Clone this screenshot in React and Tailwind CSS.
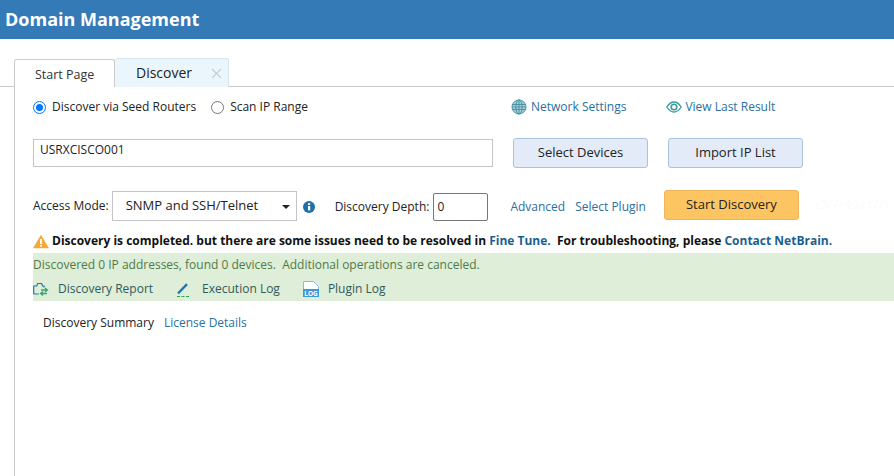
import React from "react";

const Radio = ({ on }) => (
  <span className={`w-[13px] h-[13px] rounded-full flex items-center justify-center border bg-white ${on ? "border-[#0075ff]" : "border-[#767676]"}`}>
    {on && <span className="w-[7px] h-[7px] rounded-full bg-[#0075ff]" />}
  </span>
);

const Btn = ({ children, cls }) => (
  <div className={`h-[30px] w-[135px] rounded-[3px] border flex items-center justify-center text-[13px] text-[#222] ${cls}`}>{children}</div>
);

export default function App() {
  return (
    <div className="w-[894px] h-[476px] overflow-hidden bg-white text-[12px] text-[#222] flex flex-col" style={{ fontFamily: '"Open Sans", sans-serif' }}>
      <div className="h-[39px] bg-[#337ab7] flex items-center pl-[5px] text-white font-bold text-[18px] shrink-0">Domain Management</div>

      <div className="pl-[14px] pt-[19px] flex items-end h-[48px] shrink-0 border-b border-[#c8c8c8] -mb-px relative">
        <div className="w-[101px] h-[28px] border border-[#ccc] border-b-0 rounded-t-[3px] bg-white flex items-center pl-[20px] pt-[3px] -mb-px font-normal text-[12.5px] text-[#333]">Start Page</div>
        <div className="w-[114px] h-[29px] border border-[#d6e4ec] border-l-0 border-b-0 rounded-t-[3px] bg-[#ebf6fc] flex items-center -mb-px relative">
          <span className="ml-[21px] text-[14px] text-[#222] -mt-[2px]">Discover</span>
          <svg className="absolute left-[96px] top-[9px]" width="11" height="11" viewBox="0 0 11 11" fill="none" stroke="#c5ccd0" strokeWidth="1.1"><path d="M1 1l9 9M10 1l-9 9" /></svg>
        </div>
      </div>

      <div className="ml-[14px] border-l border-[#c8c8c8] flex-1 pl-[18px] flex flex-col">
        <div className="flex items-center h-[20px] mt-[11px]">
          <Radio on />
          <span className="ml-[6px]">Discover via Seed Routers</span>
          <span className="ml-[15px]"><Radio /></span>
          <span className="ml-[6px]">Scan IP Range</span>
          <svg className="ml-[203px]" width="16" height="16" viewBox="0 0 16 16" fill="none" stroke="#4a93a8" strokeWidth="1">
            <circle cx="8" cy="8" r="7" fill="#a9d3d8" />
            <ellipse cx="8" cy="8" rx="3.2" ry="7" />
            <path d="M1 5.5h14M1 8h14M1 10.5h14M8 1v14" />
          </svg>
          <span className="ml-[4px] text-[#2a6f9e]">Network Settings</span>
          <svg className="ml-[40px]" width="16" height="12" viewBox="0 0 16 12" fill="none">
            <path d="M0.8 6C3 2.6 5.4 1 8 1s5 1.6 7.2 5C13 9.4 10.6 11 8 11S3 9.4 .8 6z" stroke="#3b9a9c" strokeWidth="1.3" />
            <circle cx="8" cy="6" r="2.8" stroke="#3b9a9c" strokeWidth="1.6" />
          </svg>
          <span className="ml-[3px] text-[#2a6f9e]">View Last Result</span>
        </div>

        <div className="flex items-center mt-[21px] h-[30px]">
          <div className="w-[460px] h-[28px] border border-[#c4c4c4] pl-[6px] pt-[2px] leading-[16px]">USRXCISCO001</div>
          <Btn cls="ml-[20px] bg-[#e3ebf8] border-[#a9c3df]">Select Devices</Btn>
          <Btn cls="ml-[20px] bg-[#e3ebf8] border-[#a9c3df]">Import IP List</Btn>
        </div>

        <div className="flex items-center mt-[22px] h-[32px] relative">
          <span>Access Mode:</span>
          <div className="ml-[3px] w-[185px] h-[30px] border border-[#c4c4c4] flex items-center pl-[13px] text-[13px] relative">
            SNMP and SSH/Telnet
            <span className="absolute left-[169px] top-[13px] w-0 h-0 border-x-[4px] border-x-transparent border-t-[4px] border-t-[#222]" />
          </div>
          <svg className="ml-[6px] mt-[2px]" width="12" height="12" viewBox="0 0 12 12">
            <circle cx="6" cy="6" r="6" fill="#1f6fa8" />
            <rect x="5" y="5" width="2.2" height="4.4" fill="#fff" />
            <rect x="5" y="2.2" width="2.2" height="1.8" fill="#fff" />
          </svg>
          <span className="ml-[20px] mt-[2px]">Discovery Depth:</span>
          <div className="ml-[4px] mt-[2px] w-[55px] h-[28px] border border-[#767676] rounded-[2px] flex items-center pl-[3px]">0</div>
          <span className="ml-[22px] mt-[2px] text-[#2a6f9e]">Advanced</span>
          <span className="ml-[10px] mt-[2px] text-[#2a6f9e]">Select Plugin</span>
          <Btn cls="ml-[18px] bg-[#fdc561] border-[#f0b55a] -mt-[3px]">Start Discovery</Btn>
          <span className="ml-[16px] text-[#fbfbfb] -mt-[3px]">c3/7c49a:f7/1</span>
        </div>

        <div className="flex items-center mt-[9px] h-[20px]">
          <svg width="16" height="15" viewBox="0 0 16 14">
            <path d="M8 .2L16 13.8H0z" fill="#f5a93a" />
            <rect x="7.1" y="4.5" width="1.8" height="5" fill="#fff" />
            <rect x="7.1" y="10.4" width="1.8" height="1.8" fill="#fff" />
          </svg>
          <span className="ml-[3px] font-bold text-[#111] text-[12px] whitespace-pre">
            Discovery is completed. but there are some issues need to be resolved in <span className="text-[#1c5f8f]">Fine Tune.</span>  For troubleshooting, please <span className="text-[#1c5f8f]">Contact NetBrain.</span>
          </span>
        </div>

        <div className="h-[48px] mt-[2px] bg-[#deeed8] flex flex-col">
          <div className="h-[24px] flex items-center text-[#4f7a4a] whitespace-pre">Discovered 0 IP addresses, found 0 devices.  Additional operations are canceled.</div>
          <div className="h-[24px] flex items-center text-[#2f5a5a]">
            <svg width="16" height="14" viewBox="0 0 16 14" fill="none">
              <path d="M.7 12V4h3l1-2.5h4L9.6 4h1.4v1.5M.7 12h5" stroke="#1f77a8" strokeWidth="1.2" />
              <path d="M8 8h6M12 6l2.4 2L12 10" stroke="#3aa76d" strokeWidth="1.4" />
              <path d="M14 11.5H8M10 9.6l-2.4 1.9L10 13.4" stroke="#3aa76d" strokeWidth="1.4" />
            </svg>
            <span className="ml-[9px]">Discovery Report</span>
            <svg className="ml-[24px]" width="12" height="15" viewBox="0 0 12 15" fill="none">
              <path d="M1 11.5L10 2.2" stroke="#1f77b4" strokeWidth="2.4" />
              <path d="M0 14.5h3M4.5 14.5h3M9 14.5h3" stroke="#2f9e5a" strokeWidth="1" />
            </svg>
            <span className="ml-[13px]">Execution Log</span>
            <svg className="ml-[23px]" width="16" height="16" viewBox="0 0 16 16" fill="none">
              <path d="M.5.5h10l5 5v10H.5z" fill="#fff" stroke="#8fb8da" />
              <rect x="0" y="8" width="16" height="8" fill="#3f96d8" />
              <text x="8" y="15" fontSize="6.5" fontWeight="700" textAnchor="middle" fill="#fff" fontFamily="Open Sans">LOG</text>
            </svg>
            <span className="ml-[9px]">Plugin Log</span>
          </div>
        </div>

        <div className="flex items-center mt-[13px] ml-[10px] h-[18px]">
          <span>Discovery Summary</span>
          <span className="ml-[10px] text-[#2a6f9e]">License Details</span>
        </div>
      </div>
    </div>
  );
}
